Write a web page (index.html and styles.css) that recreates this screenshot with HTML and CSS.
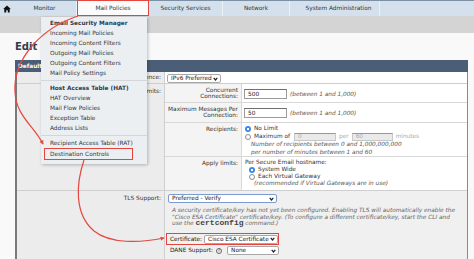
FILE: index.html
```html
<!DOCTYPE html>
<html lang="en">
<head>
    <meta charset="UTF-8">
    <meta name="viewport" content="width=device-width, initial-scale=1.0">
    <title>Edit Destination Controls</title>
    <link rel="stylesheet" href="styles.css">
</head>
<body>
    <header class="topnav">
        <span class="home">
            <svg width="8" height="8" viewBox="0 0 8 8"><path d="M4 0.4 L0.2 4 H1.3 V7.6 H3.2 V5.2 H4.8 V7.6 H6.7 V4 H7.8 Z" fill="#111"/></svg>
        </span>
        <span class="tab tab-monitor">Monitor</span>
        <span class="tab tab-mail active">Mail Policies</span>
        <span class="tab tab-security">Security Services</span>
        <span class="tab tab-network">Network</span>
        <span class="tab tab-system">System Administration</span>
    </header>
    <div class="subbar"></div>

    <main class="content">
        <h1>Edit Destination</h1>
        <section class="panel">
            <div class="panel-head">Default Destination</div>
            <div class="panel-body">
                <div class="label first">IP Address Preference:</div>
                <div class="value">
                    <span class="select sel-ip">IPv6 Preferred <svg width="5" height="4" viewBox="0 0 5 4"><polyline points="0.7,0.8 2.5,3 4.3,0.8" fill="none" stroke="#222" stroke-width="1.2"/></svg></span>
                </div>

                <div class="label">Limits:</div>
                <div class="nested">
                    <div class="sublabel">Concurrent<br>Connections:</div>
                    <div class="subvalue inline">
                        <span class="input">500</span>
                        <em>(between 1 and 1,000)</em>
                    </div>

                    <div class="sublabel">Maximum Messages Per<br>Connection:</div>
                    <div class="subvalue inline">
                        <span class="input">50</span>
                        <em>(between 1 and 1,000)</em>
                    </div>

                    <div class="sublabel">Recipients:</div>
                    <div class="subvalue">
                        <div class="opt"><span class="radio on"></span>No Limit</div>
                        <div class="opt opt-max"><span class="radio"></span>Maximum of
                            <span class="input dis dis-max">0</span>
                            <span class="muted">per</span>
                            <span class="input dis dis-per">60</span>
                            <span class="muted">minutes</span>
                        </div>
                        <div class="note">Number of recipients between 0 and 1,000,000,000<br>per number of minutes between 1 and 60</div>
                    </div>

                    <div class="sublabel">Apply limits:</div>
                    <div class="subvalue">
                        <div class="opt">Per Secure Email hostname:</div>
                        <div class="opt indent"><span class="radio on"></span>System Wide</div>
                        <div class="opt indent"><span class="radio"></span>Each Virtual Gateway</div>
                        <div class="note small">(recommended if Virtual Gateways are in use)</div>
                    </div>
                </div>

                <div class="label">TLS Support:</div>
                <div class="value tls">
                    <span class="select sel-tls">Preferred - Verify <svg width="5" height="4" viewBox="0 0 5 4"><polyline points="0.7,0.8 2.5,3 4.3,0.8" fill="none" stroke="#222" stroke-width="1.2"/></svg></span>
                    <p class="desc">A security certificate/key has not yet been configured. Enabling TLS will automatically enable the<br>"Cisco ESA Certificate" certificate/key. (To configure a different certificate/key, start the CLI and<br>use the <code>certconfig</code> command.)</p>
                    <div class="cert-box">
                        Certificate:
                        <span class="select sel-cert">Cisco ESA Certificate <svg width="5" height="4" viewBox="0 0 5 4"><polyline points="0.7,0.8 2.5,3 4.3,0.8" fill="none" stroke="#222" stroke-width="1.2"/></svg></span>
                    </div>
                    <div class="dane">
                        DANE Support:
                        <span class="help">?</span>
                        <span class="select sel-dane">None <svg width="5" height="4" viewBox="0 0 5 4"><polyline points="0.7,0.8 2.5,3 4.3,0.8" fill="none" stroke="#222" stroke-width="1.2"/></svg></span>
                    </div>
                </div>
            </div>
        </section>
    </main>

    <!-- menu desplegado de Mail Policies -->
    <nav class="menu">
        <ul>
            <li class="head">Email Security Manager</li>
            <li>Incoming Mail Policies</li>
            <li>Incoming Content Filters</li>
            <li>Outgoing Mail Policies</li>
            <li>Outgoing Content Filters</li>
            <li>Mail Policy Settings</li>
        </ul>
        <ul>
            <li class="head">Host Access Table (HAT)</li>
            <li>HAT Overview</li>
            <li>Mail Flow Policies</li>
            <li>Exception Table</li>
            <li>Address Lists</li>
        </ul>
        <ul>
            <li>Recipient Access Table (RAT)</li>
            <li class="marked">Destination Controls</li>
        </ul>
    </nav>

    <svg class="arrows" width="474" height="259" viewBox="0 0 474 259">
        <defs>
            <marker id="ah" viewBox="0 0 6 6" refX="5" refY="3" markerWidth="3.5" markerHeight="3.5" orient="auto">
                <path d="M0,0 L6,3 L0,6 Z" fill="#e5483f"/>
            </marker>
        </defs>
        <path d="M78,16 C42,28 13,58 15,92 C16,116 34,126 43,144" fill="none" stroke="#e5483f" stroke-width="1.2" marker-end="url(#ah)"/>
        <path d="M84,160 C76,184 74,214 94,231 C110,244 140,243 164,238" fill="none" stroke="#e5483f" stroke-width="1.2" marker-end="url(#ah)"/>
    </svg>
</body>
</html>
```

FILE: styles.css
```css
*{
    box-sizing: border-box;
}

body{
    margin: 0;
    width: 474px;
    height: 259px;
    overflow: hidden;
    position: relative;
    font-family: "DejaVu Sans", Verdana, sans-serif;
    font-size: 5.8px;
    line-height: 7px;
    color: #333;
    background: #f9f9f9;
}

/* barra superior */
.topnav{
    display: flex;
    height: 16px;
    background: #d4e1ec;
    border-top: 1px solid #7d8fa3;
}

.home{
    width: 13px;
    display: flex;
    align-items: center;
    justify-content: center;
}

.tab{
    display: flex;
    align-items: center;
    justify-content: center;
    border-right: 1px solid #eaf1f7;
    color: #2b3540;
}

.tab-monitor{ width: 64px; }
.tab-mail{ width: 72px; }
.tab-security{ width: 74px; }
.tab-network{ width: 67px; }
.tab-system{ width: 90px; padding-left: 8px; }

.tab.active{
    background: #fbfbfb;
    border: 1.5px solid #e2463f;
    margin-top: -1px;
    height: 16px;
}

.subbar{
    height: 17px;
    background: #d4d4d4;
}

/* contenido */
.content{
    padding: 8px 6px 0 15px;
}

h1{
    margin: 0 0 7px;
    font-size: 10px;
    line-height: 12px;
    color: #2f3d4f;
    white-space: nowrap;
}

.panel{
    width: 453px;
}

.panel-head{
    height: 12px;
    background: #4b5e77;
    color: #fff;
    font-weight: bold;
    padding: 3px 0 0 3px;
    line-height: 7px;
}

.panel-body{
    display: grid;
    grid-template-columns: 147px 1fr;
    grid-template-rows: 11px 106px 1fr;
    gap: 1px;
    height: 187px;
    background: #cfcfcf;
    border-left: 2px solid #7a7a7a;
    border-right: 1px solid #8a8a8a;
}

.label{
    background: #ececec;
    text-align: right;
    padding: 4px 3px 0 0;
    white-space: nowrap;
    overflow: hidden;
}

.label.first{
    padding-top: 2px;
}

.value{
    background: #fff;
    padding: 2px 0 0 2px;
}

.nested{
    display: grid;
    grid-template-columns: 76px 1fr;
    grid-template-rows: 18px 19px 33px 1fr;
    gap: 1px;
    background: #d8d8d8;
}

.sublabel{
    background: #f4f4f4;
    text-align: right;
    padding: 3px 3px 0 0;
    line-height: 6px;
    white-space: nowrap;
}

.subvalue{
    background: #fff;
    padding: 2px 0 0 3px;
}

.subvalue.inline{
    display: flex;
    align-items: flex-start;
    gap: 3px;
    padding: 5px 0 0 2px;

    em{
        line-height: 10px;
    }
}

em, .note{
    font-style: italic;
    color: #555;
}

.input{
    display: inline-flex;
    align-items: center;
    width: 43px;
    height: 10px;
    padding-left: 3px;
    background: #fff;
    border: 1px solid #9a9a9a;
    border-top-color: #6e6e6e;
    color: #222;
}

.input.dis{
    height: 8px;
    background: #eaeaea;
    border-color: #c8c8c8;
    border-top-color: #999;
    color: #aaa;
}

.dis-max{ width: 42px; margin-left: 1px; }
.dis-per{ width: 41px; }

.muted{
    color: #aaa;
}

.opt{
    display: flex;
    align-items: center;
    gap: 3px;
    height: 7px;
    white-space: nowrap;
}

.opt-max{
    height: 9px;
}

.opt.indent{
    padding-left: 4px;
}

.note{
    margin-left: 6px;
    line-height: 7.5px;
    white-space: nowrap;
}

.note.small{
    margin-left: 9px;
    line-height: 7px;
}

.radio{
    width: 6px;
    height: 6px;
    border-radius: 50%;
    border: 1px solid #8d8d8d;
    background: #fff;
    flex-shrink: 0;
}

.radio.on{
    border: 0;
    background: radial-gradient(circle, #fff 0 1px, #3b8ae6 1.3px);
}

/* selects */
.select{
    display: inline-flex;
    align-items: center;
    justify-content: space-between;
    height: 9px;
    padding: 0 2px 0 3px;
    background: #fff;
    border: 1px solid #a8a8a8;
    border-radius: 2px;
    color: #222;
    white-space: nowrap;
}

.sel-ip{ width: 54px; }
.sel-tls{ width: 109px; border-color: #7c9bd0; }
.sel-cert{ width: 75px; }
.sel-dane{ width: 52px; }

.tls{
    background: #f0f0f0;
    padding: 3px 0 0 3px;
}

.desc{
    margin: 4px 0 0 4px;
    font-style: italic;
    color: #666;
    line-height: 6.5px;
    white-space: nowrap;
}

.desc code{
    font-family: "Liberation Mono", monospace;
    font-style: normal;
    font-weight: bold;
    font-size: 8px;
    line-height: 6px;
    color: #444;
}

.cert-box{
    display: flex;
    align-items: center;
    gap: 2px;
    width: 113px;
    height: 12px;
    margin: 6.5px 0 0 -2px;
    padding-left: 3px;
    border: 1px solid #e2463f;
    color: #222;
}

.dane{
    display: flex;
    align-items: center;
    height: 9px;
    margin-top: 1px;
    padding-left: 2px;
    color: #222;
    white-space: nowrap;
}

.help{
    display: inline-flex;
    align-items: center;
    justify-content: center;
    width: 6px;
    height: 6px;
    margin: 0 5px 0 3px;
    border: 1px solid #666;
    border-radius: 50%;
    font-size: 4.5px;
    color: #444;
}

/* menu desplegable */
.menu{
    position: absolute;
    left: 41px;
    top: 17px;
    width: 106px;
    padding: 0.5px 0 4px;
    background: #eceff2;
    box-shadow: 1px 1px 3px rgba(0,0,0,.25);

    ul{
        list-style: none;
        margin: 0;
        padding: 0;
    }

    ul + ul{
        margin-top: 1.5px;
        padding-top: 1.5px;
        border-top: 1px solid #d3d7dc;
    }

    li{
        height: 10.2px;
        line-height: 10.2px;
        padding-left: 9px;
        color: #2e3640;
        white-space: nowrap;
    }

    .head{
        font-weight: bold;
        color: #2e3b4e;
    }

    .marked{
        width: 89px;
        height: 12px;
        line-height: 10px;
        margin-left: 3px;
        padding-left: 5px;
        border: 1px solid #e2463f;
    }
}

.arrows{
    position: absolute;
    left: 0;
    top: 0;
    pointer-events: none;
}
```
